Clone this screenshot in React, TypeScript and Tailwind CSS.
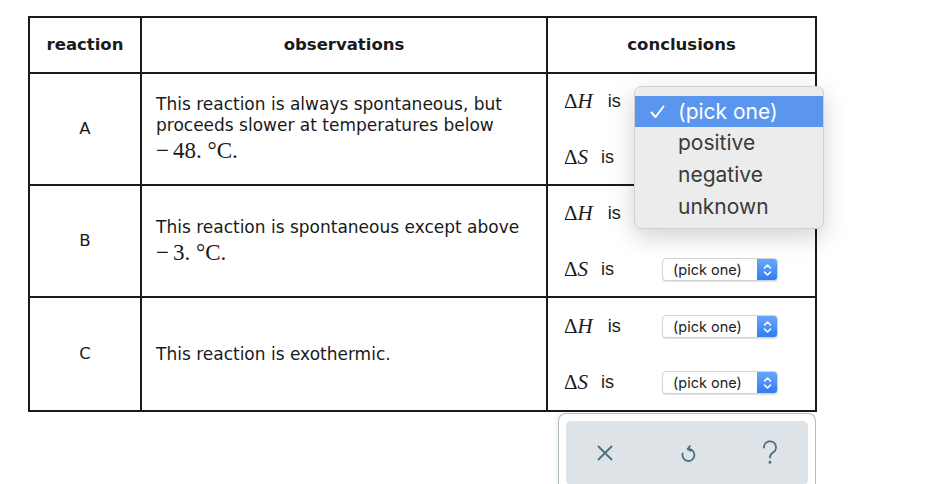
import React from 'react';

const SANS = { fontFamily: '"DejaVu Sans", Verdana, sans-serif' };
const SERIF = { fontFamily: '"Liberation Serif", "Times New Roman", serif' };
const UI = { fontFamily: 'Inter, "Liberation Sans", Arial, sans-serif' };

type Row = { id: string; lines: string[]; temp?: string };

const rows: Row[] = [
  { id: 'A', lines: ['This reaction is always spontaneous, but', 'proceeds slower at temperatures below'], temp: '48.' },
  { id: 'B', lines: ['This reaction is spontaneous except above'], temp: '3.' },
  { id: 'C', lines: ['This reaction is exothermic.'] },
];

function PickOne() {
  return (
    <div className="flex h-[23px] w-[116px] items-stretch overflow-hidden rounded-[4px] border border-[#d4d4d4] bg-white shadow-[0_1px_1px_rgba(0,0,0,0.12)]">
      <div className="flex flex-1 items-center pl-[10px] text-[14.5px] text-[#222]" style={UI}>
        (pick one)
      </div>
      <div className="flex w-[20px] items-center justify-center bg-gradient-to-b from-[#6aa6fb] to-[#2f7cf3]">
        <svg width="9" height="14" viewBox="0 0 9 14" fill="none" stroke="white" strokeWidth="1.6" strokeLinecap="round" strokeLinejoin="round">
          <path d="M1.5 5 4.5 2 7.5 5" />
          <path d="M1.5 9 4.5 12 7.5 9" />
        </svg>
      </div>
    </div>
  );
}

function Delta({ v }: { v: 'H' | 'S' }) {
  return (
    <span className="inline-flex items-center text-[#1a1a1a]">
      <span className="text-[21px]" style={SERIF}>
        Δ<span className="italic">{v}</span>
      </span>
      <span className={v === 'H' ? 'ml-[15px] text-[18px]' : 'ml-[13px] text-[18px]'} style={{ fontFamily: '"Liberation Sans", Arial, sans-serif' }}>
        is
      </span>
    </span>
  );
}

function Conclusion({ v, cls }: { v: 'H' | 'S'; cls: string }) {
  return (
    <div className={'flex items-center pl-[16px] ' + cls}>
      <div className="w-[98px]">
        <Delta v={v} />
      </div>
      <PickOne />
    </div>
  );
}

export default function App() {
  return (
    <div className="relative h-[484px] w-[938px] overflow-hidden bg-white text-[#1a1a1a]" style={SANS}>
      <div className="pl-[28px] pt-[16px]">
        <table className="border-collapse">
          <thead>
            <tr className="h-[56px]">
              <th className="w-[112px] border-2 border-[#1a1a1a] text-[16.5px] font-bold">reaction</th>
              <th className="w-[406px] border-2 border-[#1a1a1a] text-[16.5px] font-bold">observations</th>
              <th className="w-[269px] border-2 border-[#1a1a1a] text-[16.5px] font-bold">conclusions</th>
            </tr>
          </thead>
          <tbody>
            {rows.map((r, i) => (
              <tr key={r.id} className={i === 2 ? 'h-[114px]' : 'h-[112px]'}>
                <td className="border-2 border-[#1a1a1a] text-center text-[16.5px]">{r.id}</td>
                <td className="border-2 border-[#1a1a1a] pl-[14px] align-middle">
                  <div className="text-[17px] leading-[21px]">
                    {r.lines.map((l) => (
                      <div key={l}>{l}</div>
                    ))}
                  </div>
                  {r.temp && (
                    <div className="mt-[2px] text-[23px] leading-[26px]" style={SERIF}>
                      <span className="mr-[4px]">−</span>
                      {r.temp} °C.
                    </div>
                  )}
                </td>
                <td className="border-2 border-[#1a1a1a] p-0 align-top">
                  {i === 2 ? (
                    <>
                      <Conclusion v="H" cls="h-[56px] pt-[1px]" />
                      <Conclusion v="S" cls="h-[56px] pt-[1px]" />
                    </>
                  ) : (
                    <>
                      <Conclusion v="H" cls="h-[55px]" />
                      <Conclusion v="S" cls="h-[55px] pt-[2px]" />
                    </>
                  )}
                </td>
              </tr>
            ))}
          </tbody>
        </table>

        {/* toolbar */}
        <div className="ml-[530px] mt-px w-[258px] rounded-t-[8px] border border-b-0 border-[#aebcc4] px-[7px] pt-[7px] shadow-[-2px_0_4px_rgba(0,0,0,0.06)]">
          <div className="flex h-[64px] items-center justify-between rounded-[5px] bg-[#dde3e6] px-[29px] text-[#4b6e7d]">
            <svg width="20" height="20" viewBox="0 0 20 20" fill="none" stroke="currentColor" strokeWidth="1.8" strokeLinecap="round">
              <path d="M3.5 3.5 16.5 16.5M16.5 3.5 3.5 16.5" />
            </svg>
            <svg width="20" height="22" viewBox="0 0 20 22" fill="none" stroke="currentColor" strokeWidth="1.8" strokeLinecap="round" strokeLinejoin="round">
              <path d="M4.6 11.5A6 6 0 1 0 10 7" />
              <path d="M12 4.2 9.6 7 12.6 8.8" />
            </svg>
            <svg width="18" height="26" viewBox="0 0 18 26" fill="none" stroke="currentColor" strokeWidth="1.8" strokeLinecap="round">
              <path d="M3 7.5A6 6 0 1 1 12 12.5C10 13.8 9 15 9 17.5" />
              <circle cx="9" cy="22.3" r="0.6" fill="currentColor" />
            </svg>
          </div>
        </div>
      </div>

      {/* open select menu */}
      <div
        className="absolute left-[634px] top-[86px] h-[143px] w-[190px] rounded-[7px] border border-[#d0d0d0] bg-[#ececec] pt-[9px] shadow-[0_8px_24px_rgba(0,0,0,0.18)]"
        style={UI}
      >
        <div className="flex h-[31px] items-center bg-[#5a95ee] text-[21px] text-white">
          <span className="flex w-[43px] justify-center pl-[2px]">
            <svg width="15" height="14" viewBox="0 0 15 14" fill="none" stroke="white" strokeWidth="2" strokeLinecap="round" strokeLinejoin="round">
              <path d="M1.5 7.5 5.5 12 13.5 1.5" />
            </svg>
          </span>
          <span>(pick one)</span>
        </div>
        {['positive', 'negative', 'unknown'].map((o) => (
          <div key={o} className="flex h-[32px] items-center pl-[43px] text-[21px] text-[#3a3a3a]">
            {o}
          </div>
        ))}
      </div>
    </div>
  );
}
